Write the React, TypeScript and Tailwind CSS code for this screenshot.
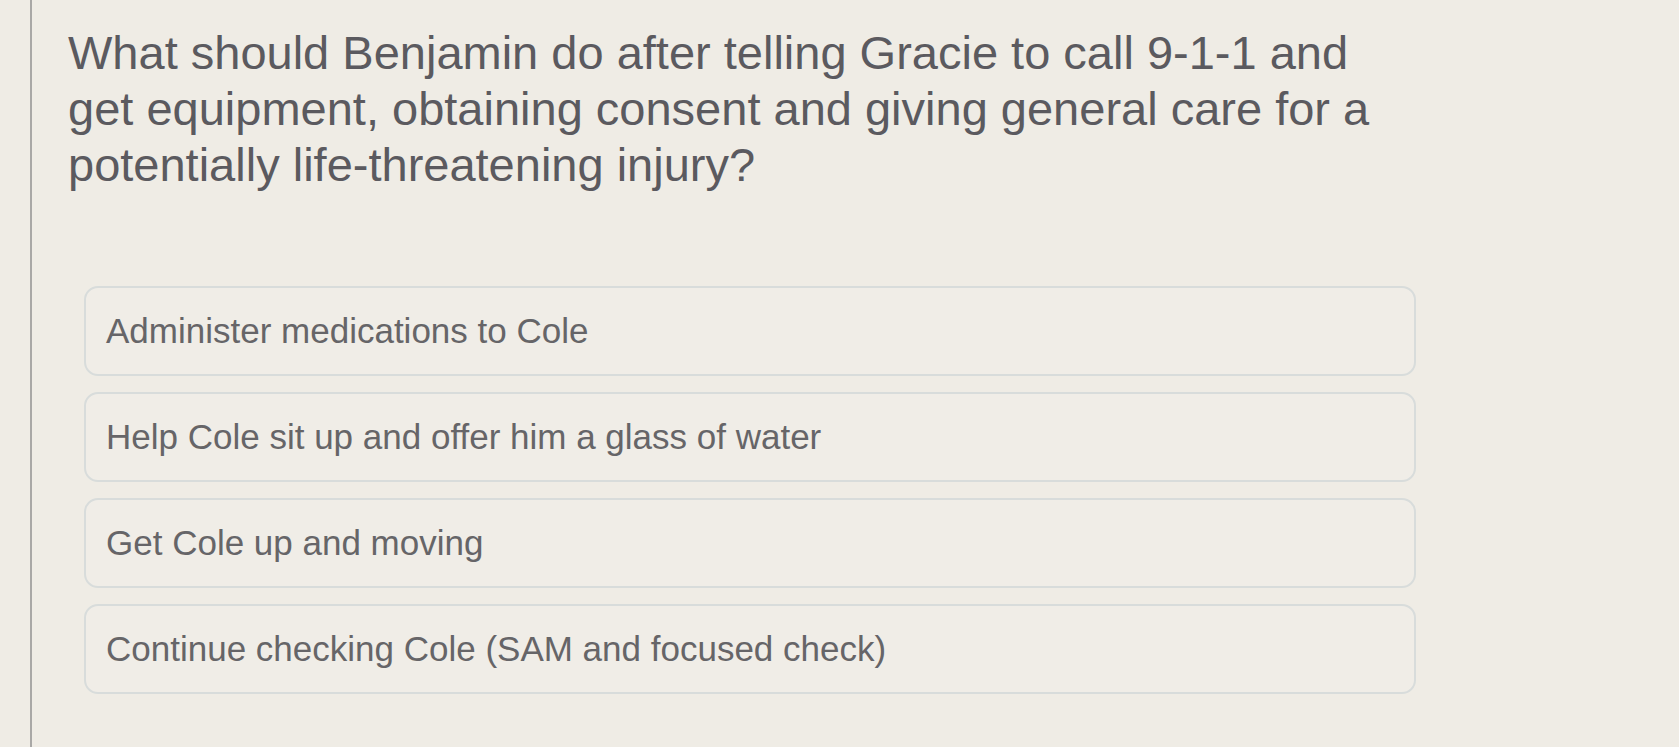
const options = [
  "Administer medications to Cole",
  "Help Cole sit up and offer him a glass of water",
  "Get Cole up and moving",
  "Continue checking Cole (SAM and focused check)",
];

export default function App() {
  return (
    <div className="h-[747px] w-full overflow-hidden bg-[#efece5] font-['Liberation_Sans',Arial,sans-serif]">
      <div className="ml-[30px] h-full border-l-2 border-[#a9a8a6] pl-[36px] pt-[25px]">
        <h1 className="w-[1330px] text-[47px] leading-[56px] text-[#5b5a5f]">
          What should Benjamin do after telling Gracie to call 9-1-1 and get
          equipment, obtaining consent and giving general care for a
          potentially life-threatening injury?
        </h1>
        <div className="mt-[93px] ml-[16px] flex w-[1332px] flex-col gap-[16px]">
          {options.map((o) => (
            <div
              key={o}
              className="flex h-[90px] items-center rounded-[14px] border-2 border-[#d8dcdb] bg-[#f0ede7] px-[20px] text-[35px] text-[#666568]"
            >
              {o}
            </div>
          ))}
        </div>
      </div>
    </div>
  );
}
